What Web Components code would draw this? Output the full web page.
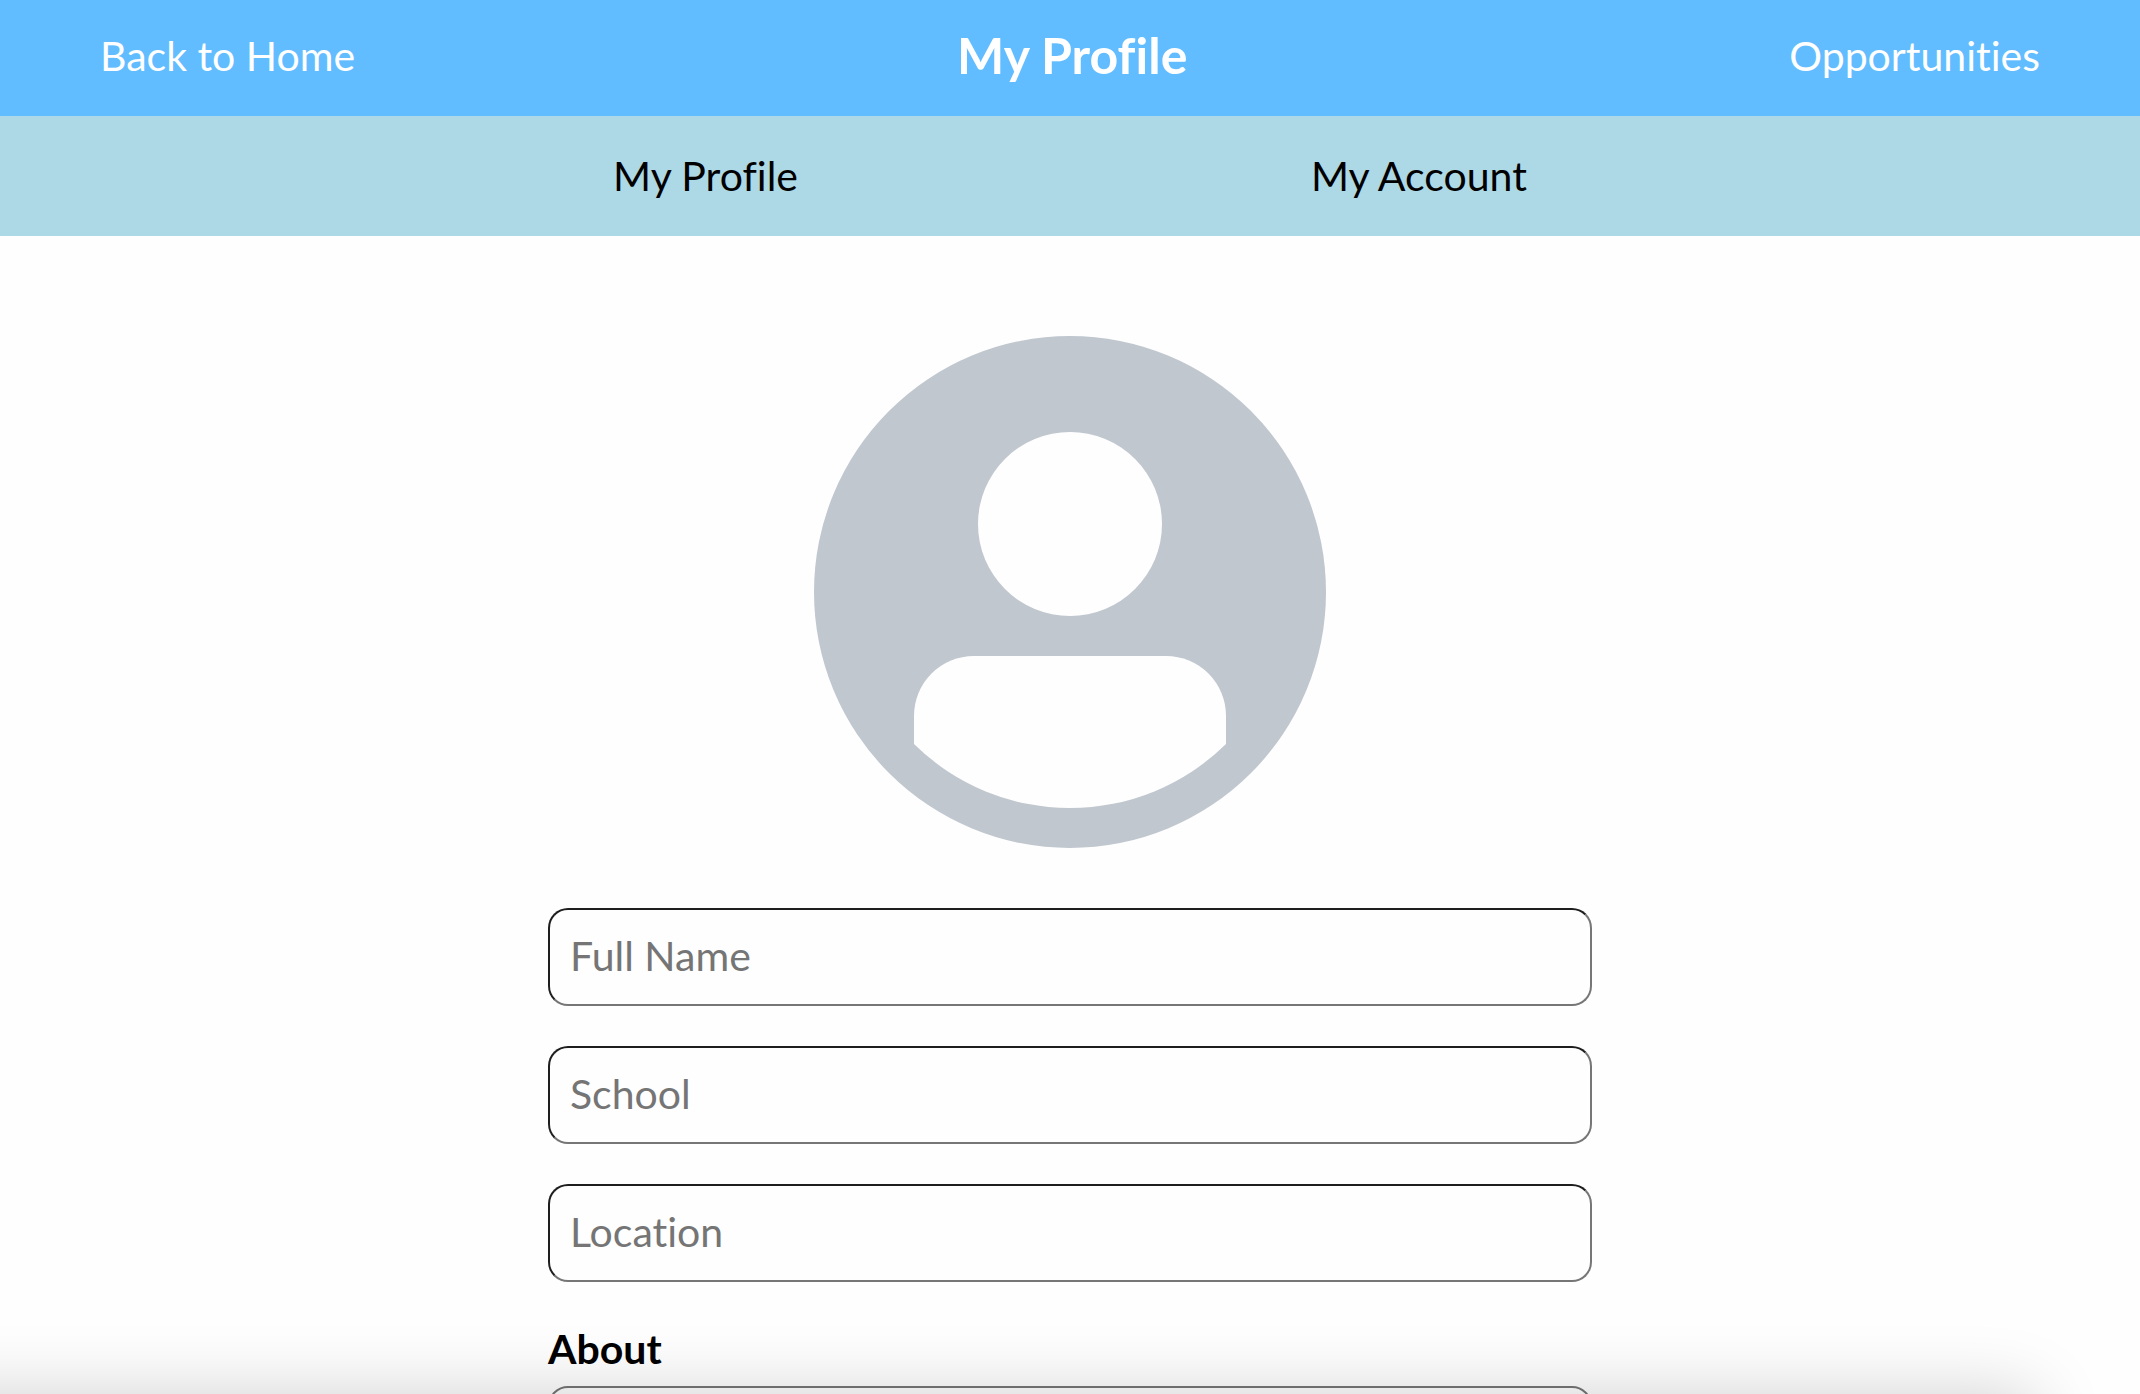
<!DOCTYPE html>
<html lang="en">
<head>
<meta charset="utf-8">
<meta name="viewport" content="width=device-width, initial-scale=1">
<title>My Profile</title>
<style>
  html, body { height: 100%; margin: 0; overflow: hidden; }
  body {
    background: #fefefe;
    color: #000;
    font: 400 41px/56px Lato, "Open Sans", sans-serif;
    font-variant-ligatures: none;
  }
</style>
</head>
<body>
<profile-page></profile-page>
<script>
  const define = (name, html) => customElements.define(name, class extends HTMLElement {
    constructor() {
      super();
      this.attachShadow({ mode: "open" }).innerHTML = html;
    }
  });

  define("top-bar", `
    <style>
      :host { display: block; background: #61bdff; color: #fff; }
      header {
        display: flex; justify-content: space-between; align-items: center;
        box-sizing: border-box; min-height: 116px; padding: 0 100px 4px;
      }
    </style>
    <header><slot></slot></header>`);

  define("tab-bar", `
    <style>
      :host { display: block; background: #add8e6; }
      nav {
        display: flex; justify-content: space-around; align-items: center;
        box-sizing: border-box; width: 66.67%; min-height: 120px;
        margin: 0 auto;
      }
    </style>
    <nav aria-label="Profile sections"><slot></slot></nav>`);

  define("user-avatar", `
    <style>
      :host { display: block; }
      svg { display: block; width: 512px; height: 512px; margin: 0 auto; }
    </style>
    <svg viewBox="0 0 512 512" role="img" aria-label="Profile picture">
      <circle cx="256" cy="256" r="256" fill="#c0c7cf"/>
      <circle cx="256" cy="188" r="92" fill="#fefefe"/>
      <path d="M160 320H352A60 60 0 0 1 412 380V408A222 222 0 0 1 100 408V380A60 60 0 0 1 160 320Z" fill="#fefefe"/>
    </svg>`);

  // A one-line text box; its placeholder also names it for assistive technology.
  customElements.define("text-field", class extends HTMLElement {
    constructor() {
      super();
      this.attachShadow({ mode: "open" }).innerHTML = `
        <style>
          :host { display: block; }
          input {
            display: block; box-sizing: border-box; width: 100%; height: 98px;
            margin: 0; padding: 0 20px 4px; font: inherit; color: #000;
            font-variant-ligatures: none;
            background: transparent; border: 2px solid;
            border-color: #1e1e1e #767676 #767676 #1e1e1e;
            border-radius: 20px;
          }
          input::placeholder { color: #757575; opacity: 1; }
        </style>
        <input type="text">`;
    }
    connectedCallback() {
      const input = this.shadowRoot.querySelector("input");
      input.placeholder = this.getAttribute("label");
      input.setAttribute("aria-label", this.getAttribute("label"));
    }
  });

  define("text-block", `
    <style>
      :host { display: block; }
      label { display: block; font-weight: 700; line-height: 54px; margin-bottom: 10px; }
      textarea {
        display: block; box-sizing: border-box; width: 100%; height: 240px;
        margin: 0; padding: 20px; font: inherit; resize: none;
        background: transparent; border: 2px solid #767676; border-radius: 20px;
      }
    </style>
    <label for="text"><slot></slot></label>
    <textarea id="text"></textarea>`);

  // Soft shade that rises from below the bottom edge of the window.
  define("bottom-shade", `
    <style>
      :host {
        position: fixed; top: 100%; left: -200px; right: 105px; height: 200px;
        box-shadow: 0 0 70px rgba(0, 0, 0, .18); pointer-events: none;
      }
    </style>`);

  define("profile-page", `
    <style>
      :host { display: block; }
      h1 { margin: 0; padding-bottom: 2px; font-size: 50px; line-height: 68px; font-weight: 700; }
      a { color: inherit; text-decoration: none; }
      main { padding-top: 100px; }
      form {
        display: flex; flex-direction: column; gap: 40px;
        width: 1044px; max-width: 90%; margin: 60px auto 0;
      }
    </style>
    <top-bar>
      <a href="#home">Back to Home</a>
      <h1>My Profile</h1>
      <a href="#opportunities">Opportunities</a>
    </top-bar>
    <tab-bar>
      <a href="#profile">My Profile</a>
      <a href="#account">My Account</a>
    </tab-bar>
    <main>
      <user-avatar></user-avatar>
      <form>
        <text-field label="Full Name"></text-field>
        <text-field label="School"></text-field>
        <text-field label="Location"></text-field>
        <text-block>About</text-block>
      </form>
    </main>
    <bottom-shade></bottom-shade>`);
</script>
</body>
</html>
